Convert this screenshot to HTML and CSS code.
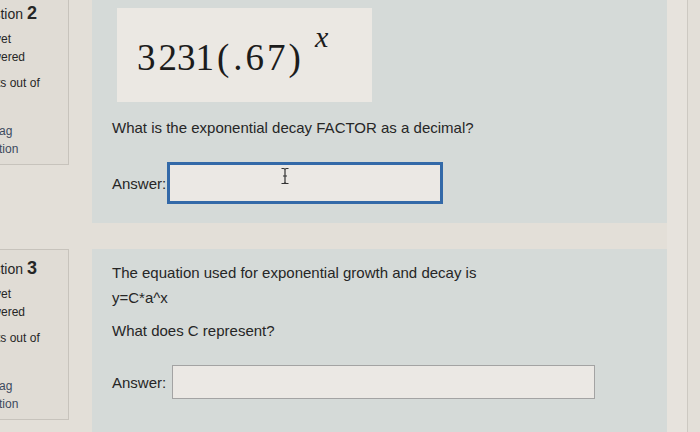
FILE: index.html
```html
<html>

<head>
    <title>Quiz</title>
    <meta name="viewport" content="width=device-width, initial-scale=1">
    <link rel="stylesheet" href="styles.css">
</head>

<body>
    <div class="page">
        <main class="questions">
            <div class="que">
                <div class="info">
                    <h3 class="qno">Question <span class="num">2</span></h3>
                    <p class="state">Not yet answered</p>
                    <p class="grade">Points out of<br>1.00</p>
                    <p class="flag"><span class="flagicon"></span>Flag<br>question</p>
                </div>
                <div class="content">
                    <div class="formula">
                        <span class="lead-digit">3</span><span>231</span><span class="paren open">(</span><span class="dot">.</span><span class="frac">67</span><span class="paren">)</span><sup class="mathvar">x</sup>
                    </div>
                    <p class="qtext lead">What is the exponential decay FACTOR as a decimal?</p>
                    <div class="answer">
                        <label>Answer:</label>
                        <div class="box focused">
                            <svg class="ibeam" width="10" height="18" viewBox="0 0 10 18">
                                <path d="M1.5 1.5 H3.5 Q5 1.5 5 3 Q5 1.5 6.5 1.5 H8.5 M5 3 V15 Q5 16.5 3.5 16.5 H1.5 M5 15 Q5 16.5 6.5 16.5 H8.5 M3 9 H7"
                                    fill="none" stroke="#333" stroke-width="1.2" />
                            </svg>
                        </div>
                    </div>
                </div>
            </div>
            <div class="que last">
                <div class="info">
                    <h3 class="qno">Question <span class="num">3</span></h3>
                    <p class="state">Not yet answered</p>
                    <p class="grade">Points out of<br>1.00</p>
                    <p class="flag"><span class="flagicon"></span>Flag<br>question</p>
                </div>
                <div class="content">
                    <p class="qtext">The equation used for exponential growth and decay is</p>
                    <p class="qtext formula-line">y=C*a^x</p>
                    <p class="qtext ask">What does C represent?</p>
                    <div class="answer wide">
                        <label>Answer:</label>
                        <div class="box"></div>
                    </div>
                </div>
            </div>
        </main>
        <div class="edge"></div>
    </div>
</body>

</html>
```

FILE: styles.css
```css
html {
    width: 100vw;
    max-width: 100%;
    overflow: hidden;
}

body {
    margin: 0px;
    padding: 0px;
    background: #e3dfd8;
    color: #262626;
    font-family: "Liberation Sans", Arial, sans-serif;
    overflow: hidden;
}

.page {
    display: flex;
    height: 432px;
}

.questions {
    width: 667px;
    margin-top: -6px;
    display: flex;
    flex-direction: column;
    gap: 26px;
}

.que {
    display: flex;
    align-items: flex-start;
    gap: 23px;
}

.que.last {
    flex: 1;
}

.edge {
    width: 20px;
    border-right: 1px solid #cdc9c2;
    background: #e7e3dd;
}

/* left info block, clipped by the window edge */
.info {
    flex: none;
    width: 87px;
    margin-left: -28px;
    padding: 8px 8px 6px 0px;
    background: #e0dcd5;
    border: 1px solid #c7c3bc;
    font-size: 12px;
}

.qno {
    margin: 0px 0px 6px -6px;
    font-size: 14px;
    font-weight: normal;
    line-height: 20px;
}

.qno .num {
    font-size: 18px;
    font-weight: bold;
}

.info p {
    margin: 0px 0px 8px 0px;
    line-height: 18px;
}

.info .grade {
    margin-bottom: 12px;
}

.info .flag {
    color: #3c4a5e;
    margin: 0px;
}

.flagicon {
    display: inline-block;
    width: 16px;
}

.content {
    flex: 1;
    align-self: stretch;
    background: #d5dad8;
    padding: 14px 20px 19px 20px;
}

.formula {
    margin-left: 5px;
    width: 255px;
    height: 94px;
    background: #ebe8e3;
    display: flex;
    align-items: center;
    padding-left: 20px;
    padding-top: 4px;
    box-sizing: border-box;
    font-family: "Liberation Serif", "Times New Roman", serif;
    font-size: 37px;
    color: #1c1c1c;
}

.lead-digit {
    margin-right: 3px;
}

.paren {
    margin: 0px;
}

.paren.open {
    margin: 0px 4px 0px 3px;
}

.dot {
    margin-right: 3px;
}

.frac {
    letter-spacing: 3px;
}

.mathvar {
    font-style: italic;
    font-size: 30px;
    align-self: flex-start;
    margin: 8px 0px 0px 14px;
}

.qtext {
    margin: 0px;
    font-size: 15px;
    line-height: 20px;
}

.qtext.lead {
    margin-top: 16px;
}

.qtext.formula-line {
    margin-top: 5px;
}

.qtext.ask {
    margin-top: 13px;
}

.answer {
    display: flex;
    align-items: center;
    margin-top: 24px;
    font-size: 15px;
}

.answer label {
    width: 55px;
}

.box {
    position: relative;
    width: 270px;
    height: 36px;
    background: #ebe8e4;
    border: 3px solid #3369a8;
}

.wide {
    margin-top: 24px;
}

.wide label {
    width: 60px;
}

.wide .box {
    width: 421px;
    height: 32px;
    border: 1px solid #a3a3a3;
}

.ibeam {
    position: absolute;
    left: 110px;
    top: 2px;
}
```
